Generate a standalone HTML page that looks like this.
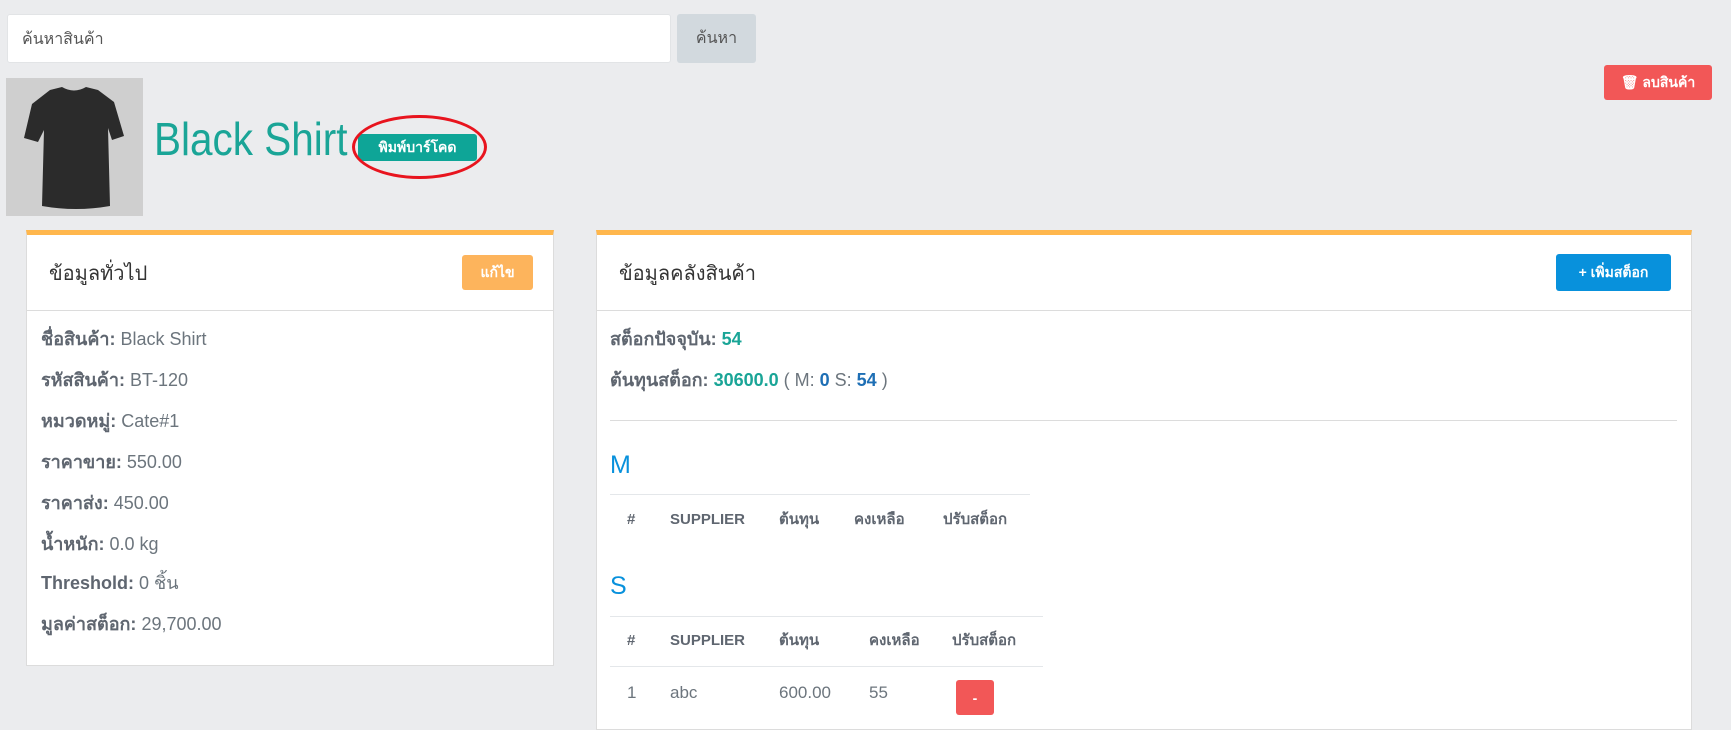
<!DOCTYPE html>
<html><head><meta charset="utf-8"><style>
*{box-sizing:border-box;margin:0;padding:0}
body{width:1731px;height:724px;background:#ebecee;font-family:"Liberation Sans",sans-serif;color:#6c757d;position:relative;overflow:hidden}
.a{position:absolute}
.btn{position:absolute;border-radius:3px;color:#fff;font-size:14px;font-weight:bold;display:flex;align-items:center;justify-content:center}
.lbl{font-weight:bold;color:#5f6670}
.row{position:absolute;left:41px;font-size:18px;line-height:22px}
.th{position:absolute;font-size:15px;font-weight:bold;color:#5f6670}
.tt{margin-top:-4px}
.td{position:absolute;font-size:17px;color:#6c757d}
</style></head><body>
<div class="a" style="left:7px;top:14px;width:664px;height:49px;background:#fff;border:1px solid #e2e4e6;border-radius:3px"></div>
<div class="a" style="left:22px;top:27px;font-size:16px;color:#555">ค้นหาสินค้า</div>
<div class="a" style="left:677px;top:14px;width:79px;height:49px;background:#d2d9de;border-radius:3px;font-size:16px;color:#555;display:flex;align-items:center;justify-content:center">ค้นหา</div>
<div class="btn" style="left:1604px;top:65px;width:108px;height:35px;background:#f25757">🗑 ลบสินค้า</div>
<div class="a" style="left:6px;top:78px;width:137px;height:138px;background:#cfcfcf">
<svg width="137" height="138" viewBox="0 0 137 138"><path d="M44 12 L56 9 Q68 16 80 9 L92 12 L108 24 L118 58 L106 62 L102 50 L104 128 Q70 134 36 128 L38 52 L32 64 L18 60 L26 26 Z" fill="#2b2b2b"/></svg></div>
<div class="a" style="left:154px;top:112px;font-size:46px;font-weight:300;color:#1aa597;transform:scaleX(0.88);transform-origin:left top">Black Shirt</div>
<div class="btn" style="left:358px;top:134px;width:119px;height:27px;background:#0ea597;font-size:14px">พิมพ์บาร์โคด</div>
<div class="a" style="left:352px;top:115px;width:135px;height:64px;border:3px solid #e8141e;border-radius:50%"></div>

<div class="a" style="left:26px;top:230px;width:528px;height:436px;background:#fff;border:1px solid #dcdcdc;border-top:5px solid #ffb74d"></div>
<div class="a" style="left:26px;top:310px;width:528px;height:1px;background:#dcdcdc"></div>
<div class="a" style="left:49px;top:257px;font-size:20px;color:#333">ข้อมูลทั่วไป</div>
<div class="btn" style="left:462px;top:255px;width:71px;height:35px;background:#fdb45c">แก้ไข</div>
<div class="row" style="top:328px"><span class="lbl">ชื่อสินค้า:</span> Black Shirt</div>
<div class="row" style="top:369px"><span class="lbl">รหัสสินค้า:</span> BT-120</div>
<div class="row" style="top:410px"><span class="lbl">หมวดหมู่:</span> Cate#1</div>
<div class="row" style="top:451px"><span class="lbl">ราคาขาย:</span> 550.00</div>
<div class="row" style="top:492px"><span class="lbl">ราคาส่ง:</span> 450.00</div>
<div class="row" style="top:533px"><span class="lbl">น้ำหนัก:</span> 0.0 kg</div>
<div class="row" style="top:572px"><span class="lbl">Threshold:</span> 0 ชิ้น</div>
<div class="row" style="top:613px"><span class="lbl">มูลค่าสต็อก:</span> 29,700.00</div>

<div class="a" style="left:596px;top:230px;width:1096px;height:500px;background:#fff;border:1px solid #dcdcdc;border-top:5px solid #ffb74d"></div>
<div class="a" style="left:596px;top:310px;width:1096px;height:1px;background:#dcdcdc"></div>
<div class="a" style="left:619px;top:257px;font-size:20px;color:#333">ข้อมูลคลังสินค้า</div>
<div class="btn" style="left:1556px;top:254px;width:115px;height:37px;background:#0891dc">+ เพิ่มสต็อก</div>
<div class="row" style="left:610px;top:328px"><span class="lbl">สต็อกปัจจุบัน:</span> <span style="color:#1aa597;font-weight:bold">54</span></div>
<div class="row" style="left:610px;top:369px"><span class="lbl">ต้นทุนสต็อก:</span> <span style="color:#1aa597;font-weight:bold">30600.0</span> ( M: <span style="color:#1e6fb5;font-weight:bold">0</span> S: <span style="color:#1e6fb5;font-weight:bold">54</span> )</div>
<div class="a" style="left:610px;top:420px;width:1067px;height:1px;background:#dcdcdc"></div>

<div class="a" style="left:610px;top:451px;font-size:25px;color:#0891dc">M</div>
<div class="a" style="left:610px;top:494px;width:420px;height:1px;background:#e4e7ea"></div>
<div class="th" style="left:627px;top:511px">#</div>
<div class="th" style="left:670px;top:511px">SUPPLIER</div>
<div class="th tt" style="left:779px;top:511px">ต้นทุน</div>
<div class="th tt" style="left:854px;top:511px">คงเหลือ</div>
<div class="th tt" style="left:943px;top:511px">ปรับสต็อก</div>

<div class="a" style="left:610px;top:572px;font-size:25px;color:#0891dc">S</div>
<div class="a" style="left:610px;top:616px;width:433px;height:1px;background:#e4e7ea"></div>
<div class="th" style="left:627px;top:632px">#</div>
<div class="th" style="left:670px;top:632px">SUPPLIER</div>
<div class="th tt" style="left:779px;top:632px">ต้นทุน</div>
<div class="th tt" style="left:869px;top:632px">คงเหลือ</div>
<div class="th tt" style="left:952px;top:632px">ปรับสต็อก</div>
<div class="a" style="left:610px;top:666px;width:433px;height:1px;background:#e4e7ea"></div>
<div class="td" style="left:627px;top:683px">1</div>
<div class="td" style="left:670px;top:683px">abc</div>
<div class="td" style="left:779px;top:683px">600.00</div>
<div class="td" style="left:869px;top:683px">55</div>
<div class="btn" style="left:956px;top:680px;width:38px;height:35px;background:#f25757">-</div>
</body></html>
